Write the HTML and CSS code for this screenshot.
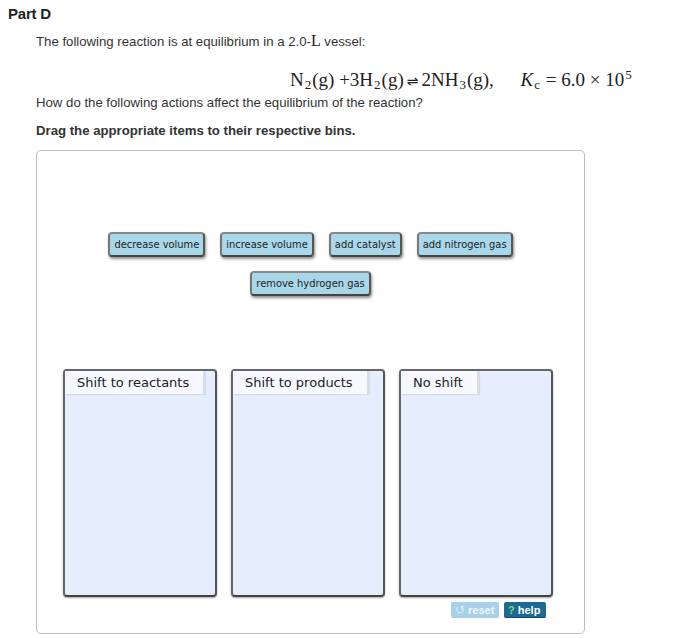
FILE: index.html
```html
<!DOCTYPE html>
<html>
<head>
<meta charset="utf-8">
<link rel="stylesheet" href="styles.css">
</head>
<body>
<h2 class="part-title">Part D</h2>
<div class="content">
  <p class="intro">The following reaction is at equilibrium in a 2.0-<span class="math-l">L</span> vessel:</p>
  <div class="equation">
    <span>N<sub>2</sub>(g) +3H<sub>2</sub>(g)</span><span class="arrow">⇌</span><span>2NH<sub>3</sub>(g),</span>
    <span class="kc"><i>K</i><sub>c</sub> = 6.0 × 10<sup>5</sup></span>
  </div>
  <p class="question">How do the following actions affect the equilibrium of the reaction?</p>
  <p class="instruction">Drag the appropriate items to their respective bins.</p>
  <div class="board">
    <div class="items">
      <div class="item">decrease volume</div>
      <div class="item">increase volume</div>
      <div class="item">add catalyst</div>
      <div class="item">add nitrogen gas</div>
      <div class="item">remove hydrogen gas</div>
    </div>
    <div class="bins">
      <div class="bin"><div class="bin-label">Shift to reactants</div></div>
      <div class="bin"><div class="bin-label">Shift to products</div></div>
      <div class="bin"><div class="bin-label">No shift</div></div>
    </div>
    <div class="tools">
      <span class="btn reset"><span class="reset-icon">↺</span>reset</span>
      <span class="btn help"><span class="q">?</span>help</span>
    </div>
  </div>
</div>
</body>
</html>
```
FILE: styles.css
```css
body {
  margin: 0;
  background: #fff;
  font-family: "Liberation Sans", Arial, sans-serif;
  color: #333;
}
.part-title {
  margin: 0;
  padding: 5px 8px 0;
  font: bold 15px/17px "Liberation Sans", Arial, sans-serif;
  color: #222;
  letter-spacing: -0.2px;
}
.content {
  padding-left: 36px;
  width: 549px;
}
.intro, .question, .instruction {
  font-size: 13.2px;
  line-height: 18px;
}
.intro { margin: 10px 0 0; }
.math-l {
  font-family: "Liberation Serif", "DejaVu Serif", serif;
  font-size: 16px;
  color: #222;
}
.equation {
  margin-top: 16px;
  height: 26px;
  line-height: 26px;
  padding-left: 254px;
  white-space: nowrap;
  font-family: "Liberation Serif", "DejaVu Serif", serif;
  font-size: 19px;
  color: #222;
}
.equation sub, .equation sup {
  font-size: 13px;
  line-height: 0;
  margin: 0 1px 0 1px;
}
.equation sub { vertical-align: -3px; }
.equation sup { vertical-align: 7px; }
.equation .arrow {
  font-family: "DejaVu Sans", sans-serif;
  font-size: 14px;
  margin: 0 3px;
}
.equation .kc { margin-left: 22px; }
.question { margin: 1px 0 0; }
.instruction { margin: 10px 0 0; font-weight: bold; }
.board {
  margin-top: 10px;
  width: 549px;
  height: 484px;
  border: 1px solid #bbb;
  border-radius: 5px;
  padding-top: 81px;
  box-sizing: border-box;
}
.items {
  display: flex;
  flex-wrap: wrap;
  justify-content: center;
  column-gap: 15px;
  row-gap: 13px;
  width: 440px;
  margin: 0 auto;
  height: 64px;
}
.item {
  height: 21px;
  line-height: 21px;
  padding: 0 4px;
  border: 2px solid #666;
  border-color: #888 #555 #444 #777;
  border-radius: 4px;
  background: #a8d7e9;
  box-shadow: 1px 2px 3px rgba(0,0,0,0.45);
  font-family: "DejaVu Sans Condensed", "DejaVu Sans", sans-serif;
  font-stretch: condensed;
  font-size: 11px;
  color: #222;
}
.bins {
  margin-top: 73px;
  margin-left: 26px;
  display: grid;
  grid-template-columns: repeat(3, 154px);
  column-gap: 14px;
}
.bin {
  height: 224px;
  border: 2px solid #555;
  border-color: #666 #555 #444 #666;
  border-radius: 4px;
  background: #e6eefd;
  box-shadow: 0 1px 2px rgba(0,0,0,0.35);
}
.bin-label {
  display: inline-block;
  background: #f6f8fe;
  padding: 4px 14px 0 12px;
  height: 19px;
  border-right: 2px solid #d8dce6;
  box-shadow: 1px 1px 1px rgba(0,0,0,0.08);
  font-family: "DejaVu Sans", sans-serif;
  font-size: 13px;
  line-height: 16px;
  color: #222;
}
.tools {
  display: flex;
  justify-content: flex-end;
  gap: 5px;
  width: 509px;
  margin-top: 5px;
}
.btn {
  height: 16px;
  font: bold 11px/16px "Liberation Sans", Arial, sans-serif;
  color: #fff;
  border-radius: 2px;
  padding: 0 4px;
}
.reset {
  background: #a9d0e6;
  color: #eef6fb;
  width: 40px;
}
.reset-icon {
  color: #d8eef8;
  font-family: "DejaVu Sans", sans-serif;
  font-weight: normal;
  font-size: 12px;
  margin-right: 3px;
}
.help {
  background: #1e6896;
  width: 34px;
  border-bottom: 1px solid #0d4a70;
  height: 15px;
}
.help .q {
  color: #7ddc5a;
  margin-right: 3px;
}
```
